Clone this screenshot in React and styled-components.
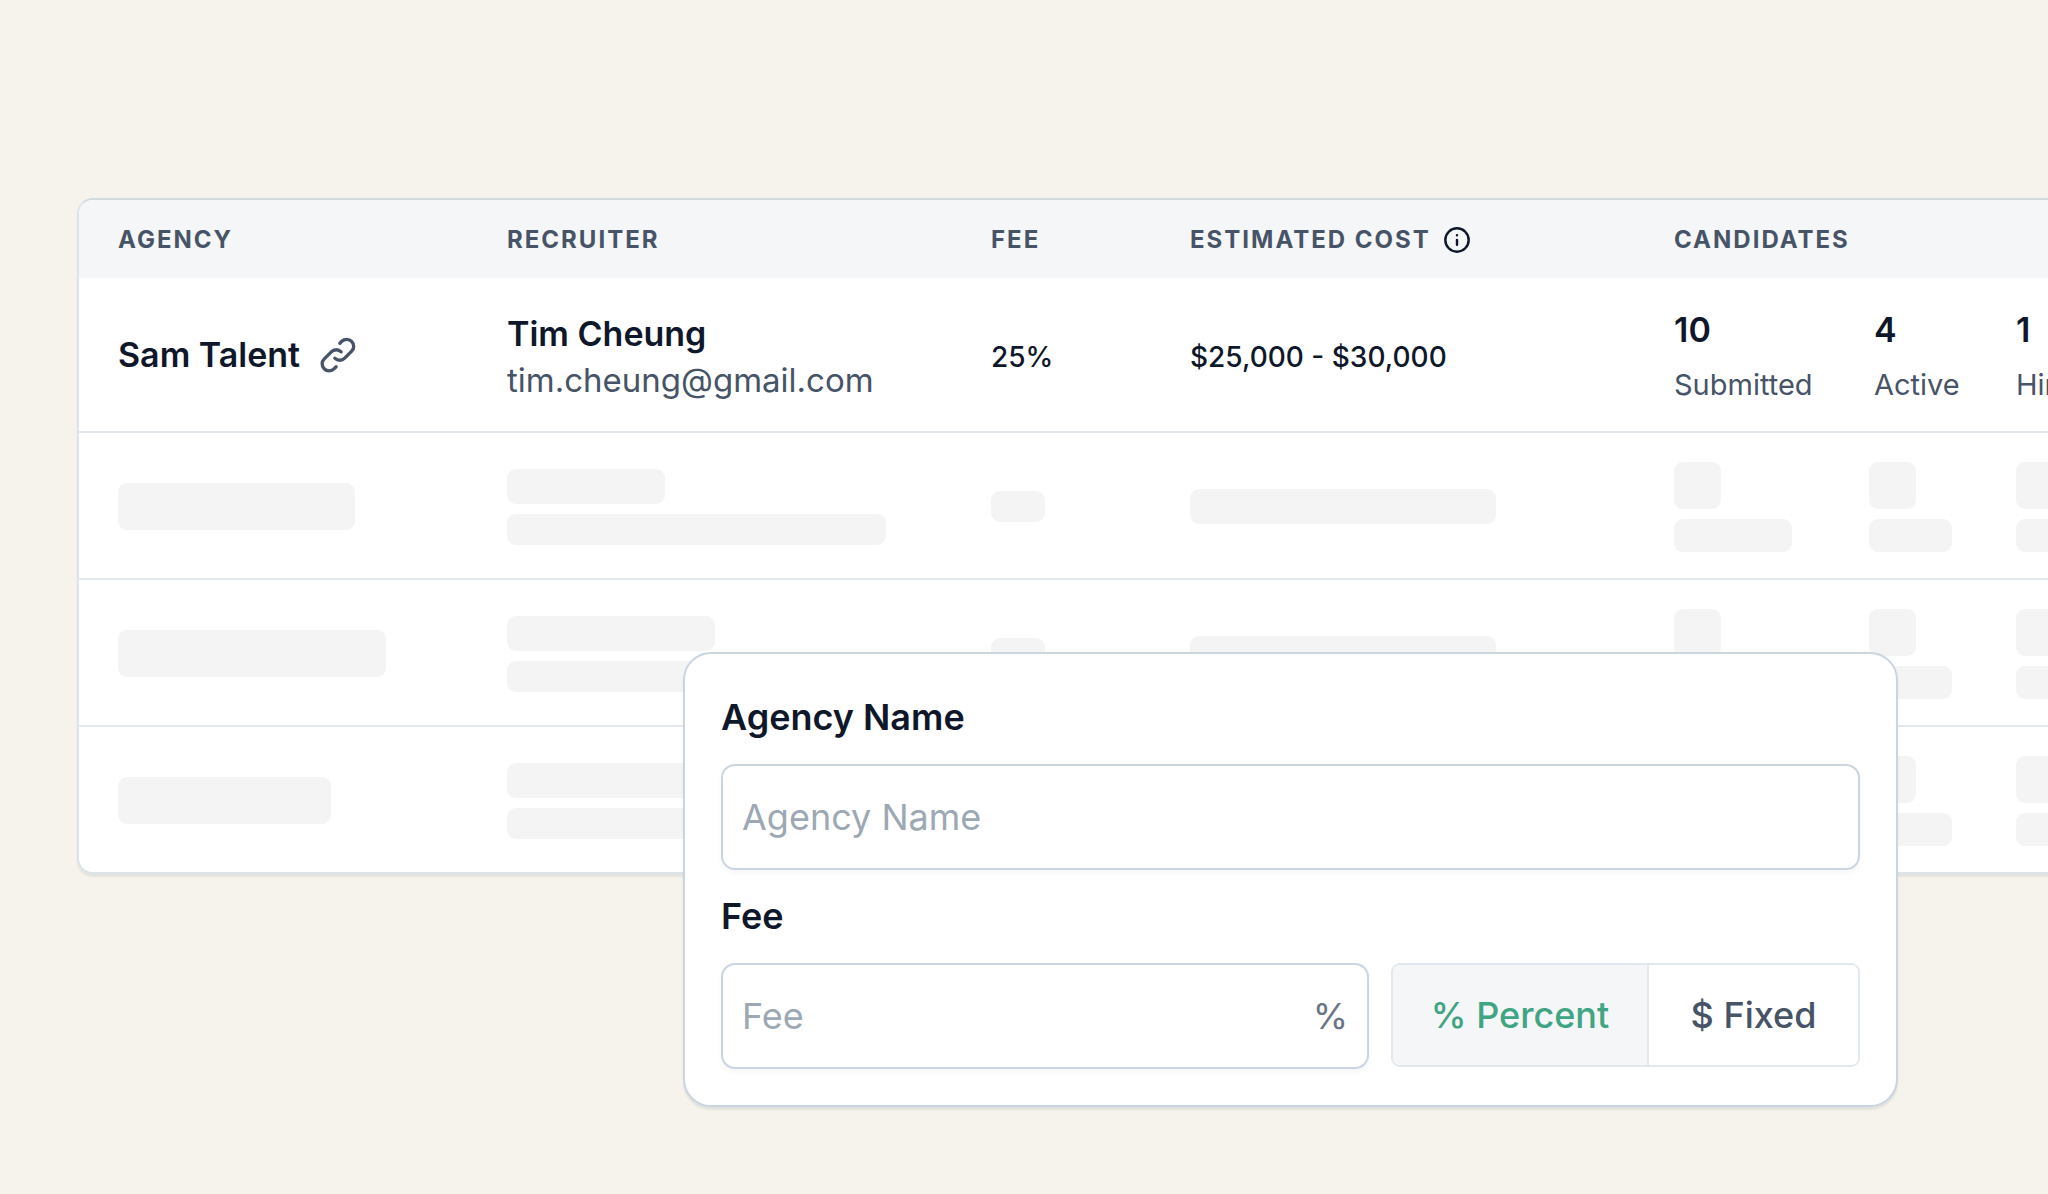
import React from "react";
import styled, { createGlobalStyle } from "styled-components";

const GlobalStyle = createGlobalStyle`
  *, *::before, *::after { box-sizing: border-box; }
  body { margin: 0; background: #f6f3ec; }
  button, input { font: inherit; }
`;

const Page = styled.main`
  position: relative;
  min-height: 100vh;
  padding: 198px 0 0 77px;
  overflow: hidden;
  background: #f6f3ec;
  color: #0f172a;
  font-family: Inter, "Liberation Sans", sans-serif;
  font-size: 28px;
  line-height: 40px;
`;

const TableFrame = styled.section`
  margin-right: -240px;
  overflow: hidden;
  border: 2px solid #dde4e9;
  border-top-color: #d3dade;
  border-radius: 16px;
  background: #fff;
  box-shadow: 0 3px 2px rgba(15, 23, 42, 0.07);
`;

const Table = styled.table`
  width: 100%;
  border-collapse: separate;
  border-spacing: 0;
  table-layout: fixed;
`;

const Column = styled.col`
  width: ${({ $width }) => ($width ? `${$width}px` : "auto")};
`;

const HeadCell = styled.th`
  height: 78px;
  padding: 2px 0 0 39px;
  background: #f5f6f8;
  color: #475467;
  font-size: 24px;
  font-weight: 700;
  letter-spacing: 2px;
  text-align: left;
  text-transform: uppercase;
  white-space: nowrap;
`;

const HeadLabel = styled.span`
  display: flex;
  align-items: center;
  gap: 12px;
`;

const Cell = styled.td`
  height: ${({ $tall }) => ($tall ? 155 : 147)}px;
  padding: ${({ $tall }) => ($tall ? 4 : 2)}px 0 0 39px;
  border-bottom: 2px solid #e3e8ed;
  white-space: nowrap;

  tr:last-child > & {
    height: 145px;
    border-bottom: 0;
  }
`;

const AgencyCell = styled.div`
  display: flex;
  align-items: center;
  gap: 17px;
  padding-bottom: 4px;
`;

const Name = styled.div`
  font-size: 34px;
  font-weight: 600;
  line-height: 47px;
`;

const Email = styled.div`
  color: #475467;
  font-size: 33px;
  line-height: 47px;
`;

const Value = styled.span`
  font-weight: 500;
`;

const IconLink = styled.a`
  display: flex;
  color: #475467;
`;

const Stats = styled.div`
  display: grid;
  grid-template-columns: ${({ $wide }) => ($wide ? "200px 142px 142px" : "195px 147px 142px")};
`;

const Stat = styled.div`
  display: flex;
  flex-direction: column;
  gap: 8px;
`;

const StatLabel = styled.div`
  color: #475467;
  font-size: 29px;
  line-height: 47px;
`;

const Stack = styled.div`
  display: flex;
  flex-direction: column;
  gap: 10px;
`;

const Bone = styled.div`
  width: ${({ $w }) => $w}px;
  height: ${({ $h }) => $h}px;
  border-radius: 9px;
  background: #f4f4f4;
`;

const FormCard = styled.form`
  position: absolute;
  top: 652px;
  right: 150px;
  width: 1215px;
  display: flex;
  flex-direction: column;
  gap: 19px;
  padding: 36px;
  border: 2px solid #cbd5e1;
  border-radius: 28px;
  background: #fff;
  box-shadow: 0 3px 2px rgba(15, 23, 42, 0.08);
  font-size: 36px;
`;

const Field = styled.div`
  display: flex;
  flex-direction: column;
  gap: 20px;
`;

const Label = styled.label`
  font-weight: 600;
  line-height: 54px;
`;

const FeeRow = styled.div`
  display: grid;
  grid-template-columns: 1fr 469px;
  align-items: start;
  gap: 22px;
`;

const InputBox = styled.div`
  display: flex;
  align-items: center;
  height: 106px;
  padding: 0 19px;
  border: 2px solid #cbd5e1;
  border-radius: 14px;
  background: #fff;
  box-shadow: 0 3px 6px rgba(15, 23, 42, 0.04);
`;

const Input = styled.input`
  flex: 1;
  min-width: 0;
  height: 54px;
  padding: 0;
  border: 0;
  outline: 0;
  background: transparent;
  color: #0f172a;

  &::placeholder {
    color: #9ca8b3;
    opacity: 1;
  }
`;

const Suffix = styled.span`
  color: #697586;
`;

const Toggle = styled.div`
  display: grid;
  grid-template-columns: 254px 1fr;
  height: 104px;
  overflow: hidden;
  border: 2px solid #e2e8f0;
  border-radius: 9px;
`;

const ToggleButton = styled.button`
  padding: 0;
  border: 0;
  background: ${({ $active }) => ($active ? "#f5f6f8" : "#fff")};
  color: ${({ $active }) => ($active ? "#3fa583" : "#475467")};
  font-weight: 500;

  & + & {
    border-left: 2px solid #e2e8f0;
  }
`;

function LinkIcon() {
  return (
    <svg width="42" height="42" viewBox="0 0 24 24" fill="none" stroke="currentColor" strokeWidth="1.9" strokeLinecap="round" strokeLinejoin="round" aria-hidden="true">
      <path d="M13.828 10.172a4 4 0 0 0-5.656 0l-4 4a4 4 0 1 0 5.656 5.656l1.102-1.101" />
      <path d="M10.172 13.828a4 4 0 0 0 5.656 0l4-4a4 4 0 0 0-5.656-5.656l-1.1 1.1" />
    </svg>
  );
}

function InfoIcon() {
  return (
    <svg width="28" height="28" viewBox="0 0 24 24" fill="none" stroke="#0f172a" strokeWidth="2.1" strokeLinecap="round" strokeLinejoin="round" aria-hidden="true">
      <circle cx="12" cy="12" r="10" />
      <path d="M12 16v-4M12 8h.01" />
    </svg>
  );
}

const stats = [
  ["10", "Submitted"],
  ["4", "Active"],
  ["1", "Hired"],
];

const loadingRows = [
  { agency: 237, name: 158 },
  { agency: 268, name: 208 },
  { agency: 213, name: 208 },
];

export default function App() {
  return (
    <Page>
      <GlobalStyle />
      <TableFrame>
        <Table>
          <colgroup>
            <Column $width={389} />
            <Column $width={484} />
            <Column $width={199} />
            <Column $width={484} />
            <Column />
          </colgroup>
          <thead>
            <tr>
              <HeadCell>Agency</HeadCell>
              <HeadCell>Recruiter</HeadCell>
              <HeadCell>Fee</HeadCell>
              <HeadCell>
                <HeadLabel>Estimated Cost <InfoIcon /></HeadLabel>
              </HeadCell>
              <HeadCell>Candidates</HeadCell>
            </tr>
          </thead>
          <tbody>
            <tr>
              <Cell $tall>
                <AgencyCell>
                  <Name>Sam Talent</Name>
                  <IconLink href="#sam-talent" aria-label="Sam Talent"><LinkIcon /></IconLink>
                </AgencyCell>
              </Cell>
              <Cell $tall>
                <Name>Tim Cheung</Name>
                <Email>tim.cheung@gmail.com</Email>
              </Cell>
              <Cell $tall><Value>25%</Value></Cell>
              <Cell $tall><Value>$25,000 - $30,000</Value></Cell>
              <Cell $tall>
                <Stats $wide>
                  {stats.map(([count, label]) => (
                    <Stat key={label}>
                      <Name>{count}</Name>
                      <StatLabel>{label}</StatLabel>
                    </Stat>
                  ))}
                </Stats>
              </Cell>
            </tr>
            {loadingRows.map((row) => (
              <tr key={row.agency}>
                <Cell><Bone $w={row.agency} $h={47} /></Cell>
                <Cell>
                  <Stack>
                    <Bone $w={row.name} $h={35} />
                    <Bone $w={379} $h={31} />
                  </Stack>
                </Cell>
                <Cell><Bone $w={54} $h={31} /></Cell>
                <Cell><Bone $w={306} $h={35} /></Cell>
                <Cell>
                  <Stats>
                    {[118, 83, 83].map((width, index) => (
                      <Stack key={index}>
                        <Bone $w={47} $h={47} />
                        <Bone $w={width} $h={33} />
                      </Stack>
                    ))}
                  </Stats>
                </Cell>
              </tr>
            ))}
          </tbody>
        </Table>
      </TableFrame>

      <FormCard onSubmit={(event) => event.preventDefault()}>
        <Field>
          <Label htmlFor="agency-name">Agency Name</Label>
          <InputBox>
            <Input id="agency-name" placeholder="Agency Name" />
          </InputBox>
        </Field>
        <Field>
          <Label htmlFor="fee">Fee</Label>
          <FeeRow>
            <InputBox>
              <Input id="fee" placeholder="Fee" />
              <Suffix>%</Suffix>
            </InputBox>
            <Toggle role="group" aria-label="Fee type">
              <ToggleButton type="button" $active aria-pressed="true">% Percent</ToggleButton>
              <ToggleButton type="button" aria-pressed="false">$ Fixed</ToggleButton>
            </Toggle>
          </FeeRow>
        </Field>
      </FormCard>
    </Page>
  );
}
